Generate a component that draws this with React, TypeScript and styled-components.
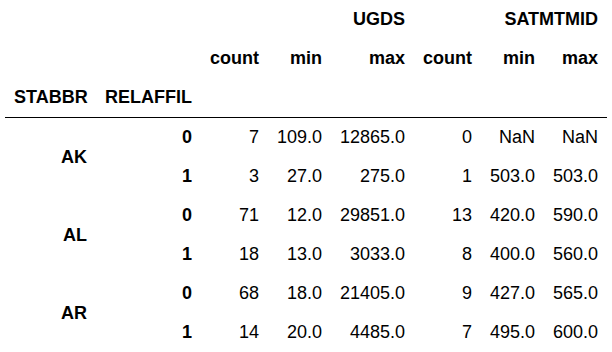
import React from "react";
import styled, { createGlobalStyle } from "styled-components";

const Global = createGlobalStyle`
  html, body { margin: 0; padding: 0; background: #ffffff; }
  body { font-family: "Liberation Sans", Arial, sans-serif; color: #000; }
`;

const Wrap = styled.div`
  padding: 0 0 0 5px;
`;

const Table = styled.table`
  border-collapse: collapse;
  border-spacing: 0;
  border: none;
  table-layout: fixed;
  width: 602px;
  font-size: 18px;
  line-height: 21px;
  color: #000;
`;

const Head = styled.thead`
  border-bottom: 1px solid #000;
  vertical-align: bottom;
`;

const Th = styled.th`
  padding: 9px;
  text-align: right;
  vertical-align: middle;
  font-weight: bold;
  white-space: nowrap;
  border: none;
`;

const Td = styled.td`
  padding: 9px;
  text-align: right;
  vertical-align: middle;
  font-weight: normal;
  white-space: nowrap;
  border: none;
`;

const widths = [91, 105, 67, 63, 83, 67, 63, 63];

type Row = { state: string; rel: string; vals: string[] };

const rows: Row[] = [
  { state: "AK", rel: "0", vals: ["7", "109.0", "12865.0", "0", "NaN", "NaN"] },
  { state: "AK", rel: "1", vals: ["3", "27.0", "275.0", "1", "503.0", "503.0"] },
  { state: "AL", rel: "0", vals: ["71", "12.0", "29851.0", "13", "420.0", "590.0"] },
  { state: "AL", rel: "1", vals: ["18", "13.0", "3033.0", "8", "400.0", "560.0"] },
  { state: "AR", rel: "0", vals: ["68", "18.0", "21405.0", "9", "427.0", "565.0"] },
  { state: "AR", rel: "1", vals: ["14", "20.0", "4485.0", "7", "495.0", "600.0"] },
];

export default function App() {
  return (
    <>
      <Global />
      <Wrap>
        <Table>
          <colgroup>
            {widths.map((w, i) => (
              <col key={i} style={{ width: w }} />
            ))}
          </colgroup>
          <Head>
            <tr>
              <Th />
              <Th />
              <Th colSpan={3}>UGDS</Th>
              <Th colSpan={3}>SATMTMID</Th>
            </tr>
            <tr>
              <Th />
              <Th />
              <Th>count</Th>
              <Th>min</Th>
              <Th>max</Th>
              <Th>count</Th>
              <Th>min</Th>
              <Th>max</Th>
            </tr>
            <tr>
              <Th>STABBR</Th>
              <Th>RELAFFIL</Th>
              <Th />
              <Th />
              <Th />
              <Th />
              <Th />
              <Th />
            </tr>
          </Head>
          <tbody>
            {rows.map((r, i) => (
              <tr key={i}>
                {i % 2 === 0 && <Th rowSpan={2}>{r.state}</Th>}
                <Th>{r.rel}</Th>
                {r.vals.map((v, j) => (
                  <Td key={j}>{v}</Td>
                ))}
              </tr>
            ))}
          </tbody>
        </Table>
      </Wrap>
    </>
  );
}
